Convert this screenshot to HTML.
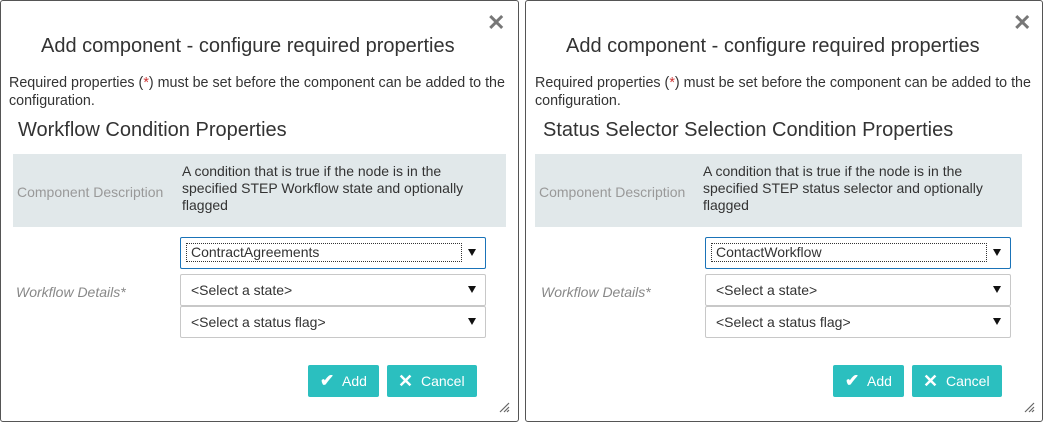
<!DOCTYPE html>
<html><head><style>
*{margin:0;padding:0;box-sizing:border-box}
body{width:1043px;height:422px;background:#fff;font-family:"Liberation Sans",Arial,sans-serif;color:#333;position:relative;overflow:hidden}
.dlg{position:absolute;top:0;height:422px;border:1px solid #555;border-radius:3px;background:#fff}
.in{position:absolute;top:-1px;left:0;right:0;bottom:0}
.a{position:absolute;white-space:nowrap}
.x{font-size:22px;font-weight:bold;color:#777;line-height:22px}
.t{font-size:20px;color:#333}
.r{font-size:14.3px;line-height:18px;white-space:normal}
.h{font-size:20px;color:#333}
.box{position:absolute;background:#e1e8ea;height:73px}
.cd{font-size:14px;color:#999}
.desc{font-size:14px;line-height:17px;white-space:normal}
.sel{position:absolute;height:32px;border:1px solid #c8c8c8;border-radius:2px;background:#fff;font-size:14px}
.sel span{position:absolute;left:10px;top:7px}
.sel i{position:absolute;right:9px;top:11px;width:0;height:0;border-left:4px solid transparent;border-right:4px solid transparent;border-top:7px solid #111}
.sel.f{border-color:#1a73b8}
.sel.f span{left:5px;top:5px;border:1px dotted #333;padding:1px 4px;width:276px;height:19px;line-height:15px}
.lbl{font-size:14px;font-style:italic;color:#888}
.btn{position:absolute;top:365px;height:32px;background:#2bbfbf;border-radius:2px;color:#fff;font-size:14px;line-height:32px}
.grip{position:absolute;width:12px;height:12px}
</style></head><body>

<div class="dlg" style="left:0;width:519px"><div class="in" style="left:-1px">
<div class="a x" style="left:487px;top:12px">✕</div>
<div class="a t" style="left:41px;top:35px">Add component - configure required properties</div>
<div class="a r" style="left:9px;top:74px;width:505px">Required properties (<span style="color:#c33">*</span>) must be set before the component can be added to the configuration.</div>
<div class="a h" style="left:18px;top:119px">Workflow Condition Properties</div>
<div class="box" style="left:13px;top:154px;width:493px"></div>
<div class="a cd" style="left:17px;top:184px">Component Description</div>
<div class="a desc" style="left:182px;top:163px;width:310px">A condition that is true if the node is in the specified STEP Workflow state and optionally flagged</div>
<div class="sel f" style="left:180px;top:237px;width:306px"><span>ContractAgreements</span><i></i></div>
<div class="sel" style="left:180px;top:274px;width:306px"><span>&lt;Select a state&gt;</span><i></i></div>
<div class="sel" style="left:180px;top:306px;width:306px"><span>&lt;Select a status flag&gt;</span><i></i></div>
<div class="a lbl" style="left:16px;top:284px">Workflow Details*</div>
<div class="btn" style="left:308px;width:71px"><span style="position:absolute;left:12px;font-size:17px;font-weight:bold">✔</span><span style="position:absolute;left:34px">Add</span></div>
<div class="btn" style="left:387px;width:90px"><span style="position:absolute;left:11px;font-size:18px;font-weight:bold">✕</span><span style="position:absolute;left:34px">Cancel</span></div>
<svg class="grip" style="left:498px;top:401px" viewBox="0 0 12 12"><path d="M11 2L2 11M11 6L6 11M11 9L9 11" stroke="#666" stroke-width="1.2"/></svg>
</div></div>

<div class="dlg" style="left:525px;width:518px"><div class="in">
<div class="a x" style="left:487px;top:12px">✕</div>
<div class="a t" style="left:40px;top:35px">Add component - configure required properties</div>
<div class="a r" style="left:9px;top:74px;width:505px">Required properties (<span style="color:#c33">*</span>) must be set before the component can be added to the configuration.</div>
<div class="a h" style="left:17px;top:119px">Status Selector Selection Condition Properties</div>
<div class="box" style="left:9px;top:154px;width:487px"></div>
<div class="a cd" style="left:13px;top:184px">Component Description</div>
<div class="a desc" style="left:177px;top:163px;width:310px">A condition that is true if the node is in the specified STEP status selector and optionally flagged</div>
<div class="sel f" style="left:179px;top:237px;width:306px"><span>ContactWorkflow</span><i></i></div>
<div class="sel" style="left:179px;top:274px;width:306px"><span>&lt;Select a state&gt;</span><i></i></div>
<div class="sel" style="left:179px;top:306px;width:306px"><span>&lt;Select a status flag&gt;</span><i></i></div>
<div class="a lbl" style="left:15px;top:284px">Workflow Details*</div>
<div class="btn" style="left:307px;width:71px"><span style="position:absolute;left:12px;font-size:17px;font-weight:bold">✔</span><span style="position:absolute;left:34px">Add</span></div>
<div class="btn" style="left:386px;width:90px"><span style="position:absolute;left:11px;font-size:18px;font-weight:bold">✕</span><span style="position:absolute;left:34px">Cancel</span></div>
<svg class="grip" style="left:497px;top:401px" viewBox="0 0 12 12"><path d="M11 2L2 11M11 6L6 11M11 9L9 11" stroke="#666" stroke-width="1.2"/></svg>
</div></div>

</body></html>
